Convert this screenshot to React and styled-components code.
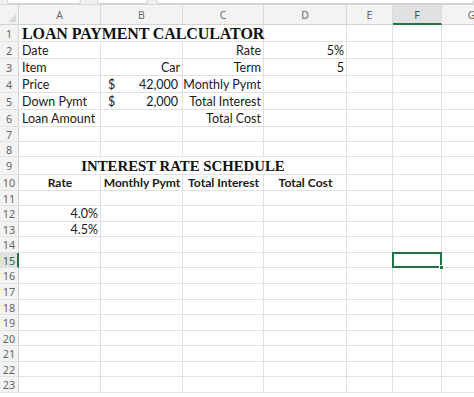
import React from "react";
import styled, { createGlobalStyle, css } from "styled-components";

const Global = createGlobalStyle`
  html, body { margin: 0; padding: 0; background: #ffffff; }
  body { width: 474px; height: 397px; overflow: hidden; font-family: "Lato", "Liberation Sans", sans-serif; }
`;

const GREEN = "#217346";
const COLS = [19, 82, 82, 81, 83, 46, 49, 60];
const ROW_H = [17, 17, 17, 17, 17, 17, 15, 15, 18, 16, 15, 16, 15, 16, 15, 16, 16, 15, 16, 15, 16, 15, 16];

const Page = styled.div`
  width: 474px;
  height: 397px;
  overflow: hidden;
  display: flex;
  flex-direction: column;
`;

const FormulaStrip = styled.div`
  height: 5px;
  flex: none;
  display: flex;
  background: #f0f0f0;
  border-bottom: 1px solid #d6d6d6;
  box-sizing: border-box;
`;

const StripBox = styled.div`
  height: 4px;
  margin-left: ${(p) => p.$ml}px;
  width: ${(p) => (p.$w ? `${p.$w}px` : "auto")};
  flex: ${(p) => (p.$w ? "none" : "1")};
  background: #ffffff;
  border: 1px solid #d0d0d0;
  border-top: none;
  border-radius: 0 0 3px 3px;
  box-sizing: border-box;
`;

const Sheet = styled.div`
  display: grid;
  grid-template-columns: ${COLS.map((c) => `${c}px`).join(" ")};
  grid-template-rows: 20px ${ROW_H.map((h) => `${h}px`).join(" ")};
  flex: none;
`;

const Corner = styled.div`
  background: #f3f3f3;
  border-right: 1px solid #d4d4d4;
  border-bottom: 1px solid #d4d4d4;
  box-sizing: border-box;
  position: relative;
  &::after {
    content: "";
    position: absolute;
    right: 2px;
    bottom: 2px;
    width: 0;
    height: 0;
    border-left: 8px solid transparent;
    border-bottom: 8px solid #d9d9d9;
  }
`;

const ColHead = styled.div`
  background: ${(p) => (p.$active ? "#e1e1e1" : "#f3f3f3")};
  border-right: 1px solid #dadada;
  border-bottom: ${(p) => (p.$active ? `2px solid ${GREEN}` : "1px solid #d4d4d4")};
  box-sizing: border-box;
  display: flex;
  align-items: center;
  justify-content: center;
  font-family: "Noto Sans", "Liberation Sans", sans-serif;
  font-size: 10.5px;
  color: ${(p) => (p.$active ? "#2a5a3d" : "#6a6a6a")};
  padding-top: 1px;
`;

const RowHead = styled.div`
  background: ${(p) => (p.$active ? "#e1e1e1" : "#f3f3f3")};
  border-right: ${(p) => (p.$active ? `2px solid ${GREEN}` : "1px solid #d4d4d4")};
  border-bottom: 1px solid #e2e2e2;
  box-sizing: border-box;
  display: flex;
  align-items: center;
  justify-content: center;
  font-family: "Noto Sans", "Liberation Sans", sans-serif;
  font-size: 10.8px;
  color: ${(p) => (p.$active ? GREEN : "#666666")};
  padding-left: ${(p) => (p.$active ? "1px" : "0")};
`;

const Cell = styled.div`
  grid-column: span ${(p) => p.$span || 1};
  border-right: 1px solid #e1e1e1;
  border-bottom: 1px solid #e1e1e1;
  box-sizing: border-box;
  display: flex;
  align-items: center;
  justify-content: ${(p) =>
    p.$align === "right" ? "flex-end" : p.$align === "center" ? "center" : "flex-start"};
  padding: 0 ${(p) => (p.$pr != null ? p.$pr : 2)}px 0 3px;
  font-size: ${(p) => (p.$bold ? 12.1 : 12.5)}px;
  font-weight: ${(p) => (p.$bold ? 700 : 400)};
  color: #1a1a1a;
  white-space: nowrap;
  overflow: visible;
  position: relative;
  ${(p) =>
    p.$selected &&
    css`
      &::after {
        content: "";
        position: absolute;
        left: -1px;
        top: -1px;
        right: -1px;
        bottom: -1px;
        border: 2px solid ${GREEN};
        pointer-events: none;
      }
      &::before {
        content: "";
        position: absolute;
        right: -3px;
        bottom: -3px;
        width: 5px;
        height: 5px;
        background: ${GREEN};
        border: 1px solid #ffffff;
        box-sizing: border-box;
        z-index: 2;
      }
    `}
`;

const Title = styled.span`
  font-family: "Liberation Serif", "DejaVu Serif", serif;
  font-weight: 700;
  font-size: ${(p) => p.$size}px;
  letter-spacing: ${(p) => p.$ls}px;
  color: #111111;
  margin-top: 1px;
`;

const Accounting = styled.div`
  display: flex;
  justify-content: space-between;
  width: 100%;
  padding: 0 4px 0 4px;
  box-sizing: border-box;
`;

const letters = ["A", "B", "C", "D", "E", "F", "G"];

const data = {
  1: [{ span: 3, title: "LOAN PAYMENT CALCULATOR", size: 16, ls: -0.1 }, {}, {}, {}, {}],
  2: [{ t: "Date" }, {}, { t: "Rate", a: "right" }, { t: "5%", a: "right" }, {}, {}, {}],
  3: [{ t: "Item" }, { t: "Car", a: "right" }, { t: "Term", a: "right" }, { t: "5", a: "right" }, {}, {}, {}],
  4: [{ t: "Price" }, { acc: ["$", "42,000"] }, { t: "Monthly Pymt", a: "right" }, {}, {}, {}, {}],
  5: [{ t: "Down Pymt" }, { acc: ["$", "2,000"] }, { t: "Total Interest", a: "right" }, {}, {}, {}, {}],
  6: [{ t: "Loan Amount" }, {}, { t: "Total Cost", a: "right" }, {}, {}, {}, {}],
  9: [{ span: 4, title: "INTEREST RATE SCHEDULE", size: 14.8, ls: 0, center: true }, {}, {}, {}],
  10: [
    { t: "Rate", a: "center", b: true },
    { t: "Monthly Pymt", a: "center", b: true },
    { t: "Total Interest", a: "center", b: true },
    { t: "Total Cost", a: "center", b: true },
    {},
    {},
    {},
  ],
  12: [{ t: "4.0%", a: "right" }, {}, {}, {}, {}, {}, {}],
  13: [{ t: "4.5%", a: "right" }, {}, {}, {}, {}, {}, {}],
};

const emptyRow = [{}, {}, {}, {}, {}, {}, {}];

export default function App() {
  return (
    <Page>
      <Global />
      <FormulaStrip>
        <StripBox $ml={7} $w={74} />
        <StripBox $ml={16} $w={51} />
        <StripBox $ml={8} />
      </FormulaStrip>
      <Sheet>
        <Corner />
        {letters.map((l) => (
          <ColHead key={l} $active={l === "F"}>
            {l}
          </ColHead>
        ))}
        {ROW_H.map((_, i) => {
          const n = i + 1;
          const cells = data[n] || emptyRow;
          return (
            <React.Fragment key={n}>
              <RowHead $active={n === 15}>{n}</RowHead>
              {cells.map((c, j) => (
                <Cell
                  key={j}
                  $span={c.span}
                  $align={c.center ? "center" : c.a}
                  $bold={c.b}
                  $selected={n === 15 && j === 5}
                  $pr={c.acc ? 0 : undefined}
                >
                  {c.title ? (
                    <Title $size={c.size} $ls={c.ls}>
                      {c.title}
                    </Title>
                  ) : c.acc ? (
                    <Accounting>
                      <span>{c.acc[0]}</span>
                      <span>{c.acc[1]}</span>
                    </Accounting>
                  ) : (
                    c.t
                  )}
                </Cell>
              ))}
            </React.Fragment>
          );
        })}
      </Sheet>
    </Page>
  );
}
